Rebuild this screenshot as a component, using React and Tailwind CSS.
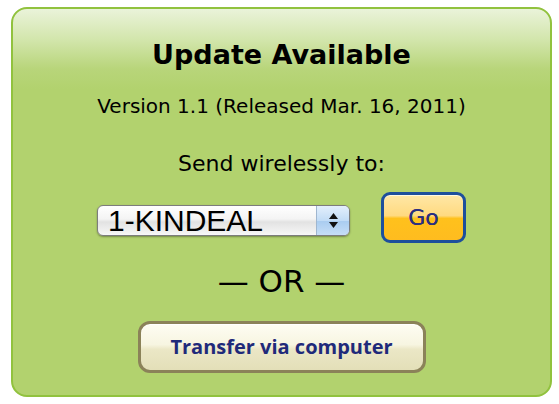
import React from "react"

function Stepper() {
  return (
    <div className="flex h-full w-[33px] flex-col items-center justify-center gap-[3px] rounded-r-[5px] border-l border-[#9fb6cf] bg-[linear-gradient(to_bottom,#e3effc_0%,#c2dcf6_50%,#a9ccf0_52%,#c6def6_100%)]">
      <svg width="9" height="6" viewBox="0 0 9 6">
        <path d="M4.5 0 L9 6 L0 6 Z" fill="#111" />
      </svg>
      <svg width="9" height="6" viewBox="0 0 9 6">
        <path d="M0 0 L9 0 L4.5 6 Z" fill="#111" />
      </svg>
    </div>
  )
}

export default function App() {
  return (
    <div className="h-[404px] w-[559px] overflow-hidden bg-white pl-[11px] pt-[7px]">
      <div
        className="flex h-[390px] w-[541px] flex-col items-center rounded-[16px] border-2 border-[#91c23e] bg-[linear-gradient(to_bottom,#eaf3da_0px,#d3e6ad_30px,#b8d57a_60px,#b2d26e_80px,#b2d26e_100%)] pt-[30px] text-black"
        style={{ fontFamily: '"DejaVu Sans", Verdana, sans-serif' }}
      >
        <h1 className="text-[27px] font-bold leading-[32px]">Update Available</h1>
        <p className="mt-[23px] text-[20px] leading-[24px]">
          Version 1.1 (Released Mar. 16, 2011)
        </p>
        <p className="mt-[32px] text-[22px] leading-[28px]">Send wirelessly to:</p>

        <div className="mt-[14px] flex items-start gap-[31px]">
          <div className="mt-[13px] flex h-[31px] w-[253px] items-center rounded-[6px] border border-[#7d7d7d] bg-[linear-gradient(to_bottom,#ffffff_0%,#f4f4f4_45%,#e2e2e2_55%,#f7f7f7_100%)] shadow-[0_1px_2px_rgba(0,0,0,0.35)]">
            <span
              className="flex-1 pl-[10px] text-[30px] leading-[29px] text-black"
              style={{ fontFamily: '"Liberation Sans", Arial, sans-serif' }}
            >
              1-KINDEAL
            </span>
            <Stepper />
          </div>

          <button className="flex h-[51px] w-[85px] items-center justify-center rounded-[9px] border-[3px] border-[#1d4f9c] bg-[linear-gradient(to_bottom,#ffe7a6_0%,#ffda80_46%,#ffc11c_52%,#ffbc1f_100%)] text-[22px] leading-none text-[#2b2f80] shadow-[inset_0_1px_0_rgba(255,255,255,0.7)] [text-shadow:0_0_0.4px_#2b2f80]">
            Go
          </button>
        </div>

        <p className="mt-[20px] text-[31px] leading-[36px]">— OR —</p>

        <button
          className="mt-[22px] flex h-[52px] w-[288px] items-center justify-center rounded-[12px] border-[3px] border-[#8b8259] bg-[linear-gradient(to_bottom,#fefdf3_0%,#f7f5e1_45%,#ebe7c6_55%,#e3dfb8_100%)] text-[20px] font-bold text-[#1f2a7a] shadow-[inset_0_1px_0_#ffffff]"
          style={{ fontFamily: '"Open Sans", Tahoma, sans-serif' }}
        >
          Transfer via computer
        </button>
      </div>
    </div>
  )
}
